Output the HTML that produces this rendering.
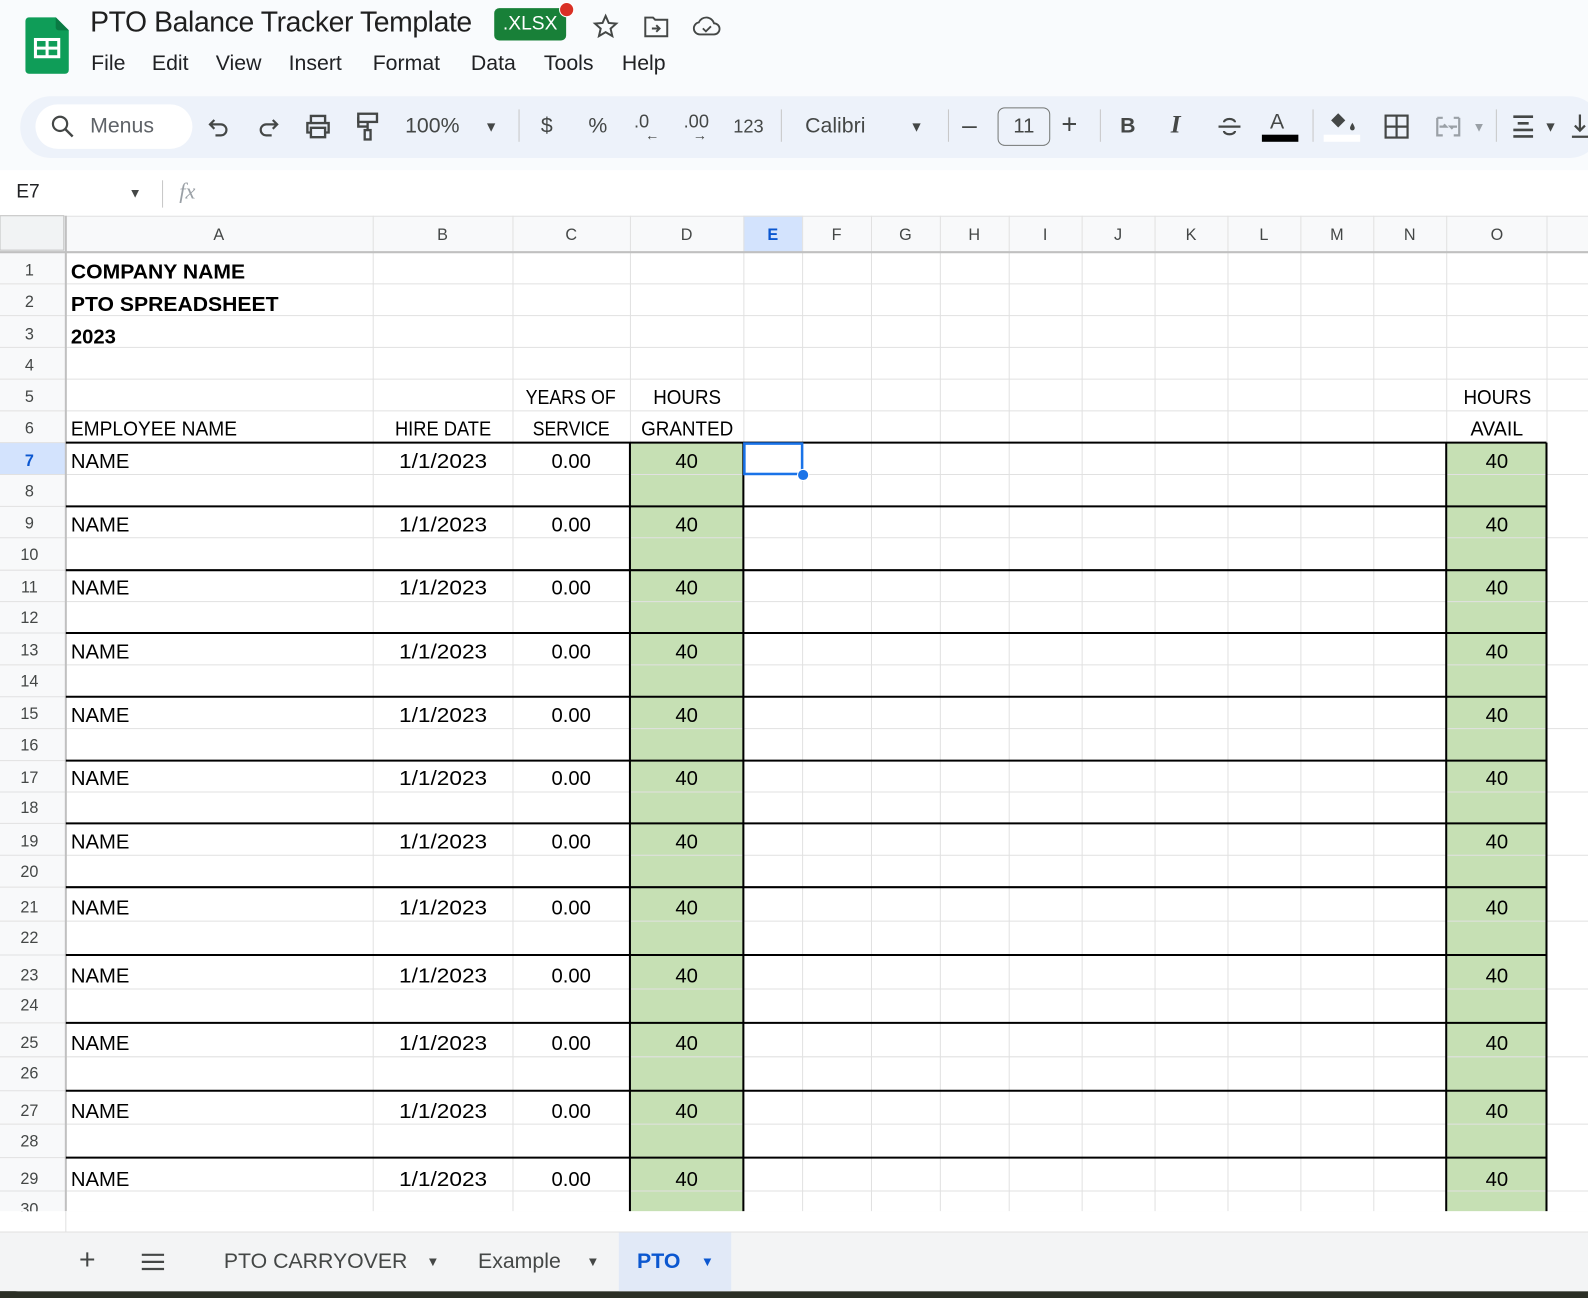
<!DOCTYPE html>
<html><head><meta charset="utf-8"><style>
html,body{margin:0;padding:0;width:1588px;height:1298px;overflow:hidden;background:#2b2f25;}
#w{position:absolute;left:0;top:0;width:1568px;height:1282px;transform:scale(1.01276);transform-origin:0 0;font-family:"Liberation Sans",Arial,sans-serif;}
.a{position:absolute;white-space:nowrap;}
.menu{top:51px;font-size:21px;color:#202124;}
.tb{top:113px;font-size:21px;color:#444746;}
.sep{position:absolute;top:108px;width:1px;height:32px;background:#c7c7c7;}
</style></head><body><div id="w">
<div class="a" style="left:0;top:0;width:1568px;height:1275px;background:#f9fbfd;border-radius:0 0 0 18px;overflow:hidden"></div>
<svg class="a" style="left:25px;top:17px" width="43" height="56" viewBox="0 0 43 56"><path d="M4 0h26l13 13v39a4 4 0 0 1-4 4H4a4 4 0 0 1-4-4V4a4 4 0 0 1 4-4z" fill="#0f9d58"/><path d="M30 0l13 13H33a3 3 0 0 1-3-3z" fill="#0a7a43"/><rect x="10" y="22" width="23" height="17" fill="none" stroke="#fff" stroke-width="3"/><line x1="21.5" y1="22" x2="21.5" y2="39" stroke="#fff" stroke-width="3"/><line x1="10" y1="30.5" x2="33" y2="30.5" stroke="#fff" stroke-width="3"/></svg>
<div class="a" style="left:89px;top:6px;font-size:28px;color:#1f1f1f;letter-spacing:-0.4px">PTO Balance Tracker Template</div>
<div class="a" style="left:488px;top:8px;width:71px;height:32px;background:#188038;border-radius:5px;color:#fff;font-size:19px;line-height:32px;text-align:center">.XLSX</div>
<div class="a" style="left:552px;top:2px;width:13px;height:13px;background:#d93025;border-radius:50%;border:1px solid #fff"></div>
<svg class="a" style="left:585px;top:13px" width="26" height="26" viewBox="0 0 24 24"><path d="M12 2.5l2.8 6.4 6.9.6-5.2 4.6 1.6 6.8L12 17.3l-6.1 3.6 1.6-6.8-5.2-4.6 6.9-.6z" fill="none" stroke="#444746" stroke-width="1.8"/></svg>
<svg class="a" style="left:635px;top:14px" width="26" height="24" viewBox="0 0 24 22"><path d="M2 3h7l2 2h11v15H2z" fill="none" stroke="#444746" stroke-width="1.8"/><path d="M8 13h7m-3-3l3 3-3 3" fill="none" stroke="#444746" stroke-width="1.8"/></svg>
<svg class="a" style="left:683px;top:14px" width="30" height="24" viewBox="0 0 30 22"><path d="M8 19a6 6 0 0 1-1-11.9A8 8 0 0 1 22 8a5.5 5.5 0 0 1 0 11z" fill="none" stroke="#444746" stroke-width="1.8"/><path d="M11 13l3 3 5-5" fill="none" stroke="#444746" stroke-width="1.8"/></svg>
<div class="a menu" style="left:90px">File</div><div class="a menu" style="left:150px">Edit</div><div class="a menu" style="left:213px">View</div><div class="a menu" style="left:285px">Insert</div><div class="a menu" style="left:368px">Format</div><div class="a menu" style="left:465px">Data</div><div class="a menu" style="left:537px">Tools</div><div class="a menu" style="left:614px">Help</div>
<div class="a" style="left:20px;top:95px;width:1560px;height:61px;background:#edf2fa;border-radius:30px"></div>
<div class="a" style="left:35px;top:103px;width:155px;height:44px;background:#fff;border-radius:22px"></div>
<svg class="a" style="left:49px;top:112px" width="26" height="26" viewBox="0 0 24 24"><circle cx="9.5" cy="9.5" r="6.5" fill="none" stroke="#444746" stroke-width="2"/><path d="M14.5 14.5l6.5 6.5" stroke="#444746" stroke-width="2.2"/></svg>
<div class="a tb" style="left:89px;color:#5f6368">Menus</div>
<svg class="a" style="left:203px;top:112px" width="26" height="26" viewBox="0 0 24 24"><path d="M8 6L4 10l4 4M4 10h10a5 5 0 0 1 0 10H9" fill="none" stroke="#444746" stroke-width="2"/></svg>
<svg class="a" style="left:252px;top:112px" width="26" height="26" viewBox="0 0 24 24"><path d="M16 6l4 4-4 4M20 10H10a5 5 0 0 0 0 10h5" fill="none" stroke="#444746" stroke-width="2"/></svg>
<svg class="a" style="left:300px;top:111px" width="28" height="28" viewBox="0 0 24 24"><path d="M6 8V3h12v5M6 17H3V9h18v8h-3M6 13h12v8H6z" fill="none" stroke="#444746" stroke-width="2"/></svg>
<svg class="a" style="left:350px;top:110px" width="26" height="30" viewBox="0 0 22 26"><rect x="3" y="2" width="16" height="7" fill="none" stroke="#444746" stroke-width="2"/><path d="M11 9v4H3V5M11 13v3" fill="none" stroke="#444746" stroke-width="2"/><rect x="8.5" y="16" width="5" height="8" fill="none" stroke="#444746" stroke-width="2"/></svg>
<div class="a tb" style="left:400px">100%</div>
<div class="a tb" style="left:478px;font-size:14px;top:117px">▼</div>
<div class="sep" style="left:512px"></div>
<div class="a tb" style="left:534px">$</div><div class="a tb" style="left:581px">%</div>
<div class="a tb" style="left:626px;font-size:18px;top:110px">.0</div><div class="a tb" style="left:637px;font-size:14px;top:125px">←</div>
<div class="a tb" style="left:675px;font-size:18px;top:110px">.00</div><div class="a tb" style="left:684px;font-size:14px;top:125px">→</div>
<div class="a tb" style="left:724px;font-size:18px;top:115px">123</div>
<div class="sep" style="left:771px"></div>
<div class="a tb" style="left:795px">Calibri</div>
<div class="a tb" style="left:898px;font-size:14px;top:117px">▼</div>
<div class="sep" style="left:936px"></div>
<div class="a tb" style="left:950px;top:108px;font-size:26px">–</div>
<div class="a" style="left:985px;top:106px;width:50px;height:36px;border:1px solid #747775;border-radius:7px;font-size:20px;line-height:36px;text-align:center;color:#444746">11</div>
<div class="a tb" style="left:1048px;top:108px;font-size:27px">+</div>
<div class="sep" style="left:1086px"></div>
<div class="a tb" style="left:1106px;font-weight:bold">B</div>
<div class="a tb" style="left:1156px;font-style:italic;font-family:'Liberation Serif',serif;font-size:25px;top:110px;font-weight:bold">I</div>
<svg class="a" style="left:1201px;top:112px" width="26" height="26" viewBox="0 0 24 24"><path d="M2 12h20M7 8a5 3 0 0 1 10 0M7 16a5 3 0 0 0 10 0" fill="none" stroke="#444746" stroke-width="2"/></svg>
<div class="a tb" style="left:1254px;top:109px">A</div>
<div class="a" style="left:1246px;top:133px;width:36px;height:7px;background:#000"></div>
<div class="sep" style="left:1296px"></div>
<svg class="a" style="left:1312px;top:107px" width="28" height="26" viewBox="0 0 24 22"><path d="M6 2l8 8-6 6-6-6 6-6z" fill="#444746"/><path d="M20 12c0 0 2 3 2 4.5a2 2 0 0 1-4 0c0-1.5 2-4.5 2-4.5z" fill="#444746"/></svg>
<div class="a" style="left:1307px;top:133px;width:36px;height:7px;background:#fff"></div>
<svg class="a" style="left:1366px;top:112px" width="26" height="26" viewBox="0 0 24 24"><rect x="2" y="2" width="20" height="20" fill="none" stroke="#444746" stroke-width="2"/><path d="M12 2v20M2 12h20" stroke="#444746" stroke-width="2"/></svg>
<svg class="a" style="left:1417px;top:112px" width="26" height="26" viewBox="0 0 24 24"><path d="M2 4h5M2 4v16h5M22 4h-5M22 4v16h-5M4 12h6l-2-2M20 12h-6l2 2" fill="none" stroke="#9aa0a6" stroke-width="2"/></svg>
<div class="a tb" style="left:1454px;font-size:13px;top:118px;color:#9aa0a6">▼</div>
<div class="sep" style="left:1477px"></div>
<svg class="a" style="left:1491px;top:112px" width="26" height="26" viewBox="0 0 24 24"><path d="M3 3h18M7 9h10M3 15h18M3 21h18" stroke="#444746" stroke-width="2.4"/></svg>
<div class="a tb" style="left:1524px;font-size:14px;top:117px">▼</div>
<svg class="a" style="left:1552px;top:110px" width="16" height="28" viewBox="0 0 16 28"><path d="M8 3v16M3 14l5 5 5-5M0 25h16" fill="none" stroke="#444746" stroke-width="2.2"/></svg>
<div class="a" style="left:0;top:168px;width:1568px;height:45px;background:#fff"></div>
<div class="a" style="left:16px;top:179px;font-size:19px;color:#202124">E7</div>
<div class="a" style="left:127px;top:183px;font-size:13px;color:#444746">▼</div>
<div class="a" style="left:160px;top:178px;width:1px;height:27px;background:#c7c7c7"></div>
<div class="a" style="left:177px;top:176px;font-size:22px;color:#9aa0a6;font-family:'Liberation Serif',serif;font-style:italic">fx</div>
<svg class="a" style="left:0;top:0" width="1568" height="1275" viewBox="0 0 1568 1275" font-family="Liberation Sans, Arial, sans-serif">
<rect x="0" y="213" width="1568" height="983" fill="#fff"/>
<rect x="0" y="213" width="1568" height="36" fill="#f8f9fa"/>
<rect x="0" y="249" width="65" height="947" fill="#f8f9fa"/>
<rect x="734" y="213" width="58" height="36" fill="#d3e3fd"/>
<rect x="0" y="437" width="65" height="31.5" fill="#d3e3fd"/>
<rect x="622" y="437" width="112" height="759" fill="#c6e0b4"/>
<rect x="1428" y="437" width="99" height="759" fill="#c6e0b4"/>
<g stroke="#e1e1e1" stroke-width="1">
<path d="M0 213.5H1568M0 280.3H1568M0 311.7H1568M0 343H1568M0 374.3H1568M0 405.7H1568M0 468.5H1568M0 531H1568M0 594H1568M0 656.5H1568M0 719.5H1568M0 782H1568M0 844.5H1568M0 909.5H1568M0 976.5H1568M0 1043.5H1568M0 1110H1568M0 1176H1568"/>
<path d="M368.5 213V1196M506.5 213V1196M622.5 213V1196M734.5 213V1196M792.5 213V1196M860.5 213V1196M928.5 213V1196M996.5 213V1196M1068.5 213V1196M1140.5 213V1196M1212.5 213V1196M1284.5 213V1196M1356.5 213V1196M1428.5 213V1196M1527.5 213V1196"/>
<path d="M0 500H65M0 563H65M0 625H65M0 688H65M0 751H65M0 813H65M0 876H65M0 943H65M0 1010H65M0 1077H65M0 1143H65M0 437H65"/>
</g>
<path d="M0 249H1568M65 213V1196" stroke="#c0c0c0" stroke-width="2"/>
<rect x="0" y="213" width="63" height="34" fill="#f1f3f4" stroke="#c0c0c0"/>
<g stroke="#000" stroke-width="2">
<path d="M65 437H1527M65 500H1527M65 563H1527M65 625H1527M65 688H1527M65 751H1527M65 813H1527M65 876H1527M65 943H1527M65 1010H1527M65 1077H1527M65 1143H1527"/>
<path d="M622 437V1196M734 437V1196M1428 437V1196M1527 437V1196"/>
</g>
<g font-size="16" fill="#444746" text-anchor="middle">
<text x="216" y="237">A</text><text x="437" y="237">B</text><text x="564" y="237">C</text><text x="678" y="237">D</text><text x="763" y="237" font-weight="bold" fill="#0b57d0">E</text><text x="826" y="237">F</text><text x="894" y="237">G</text><text x="962" y="237">H</text><text x="1032" y="237">I</text><text x="1104" y="237">J</text><text x="1176" y="237">K</text><text x="1248" y="237">L</text><text x="1320" y="237">M</text><text x="1392" y="237">N</text><text x="1478" y="237">O</text>
<text x="29" y="272">1</text><text x="29" y="303">2</text><text x="29" y="335">3</text><text x="29" y="366">4</text><text x="29" y="397">5</text><text x="29" y="428">6</text><text x="29" y="460" font-weight="bold" fill="#0b57d0">7</text><text x="29" y="490">8</text><text x="29" y="522">9</text><text x="29" y="553">10</text><text x="29" y="585">11</text><text x="29" y="615">12</text><text x="29" y="647">13</text><text x="29" y="678">14</text><text x="29" y="710">15</text><text x="29" y="741">16</text><text x="29" y="773">17</text><text x="29" y="803">18</text><text x="29" y="836">19</text><text x="29" y="866">20</text><text x="29" y="901">21</text><text x="29" y="931">22</text><text x="29" y="968">23</text><text x="29" y="998">24</text><text x="29" y="1035">25</text><text x="29" y="1065">26</text><text x="29" y="1102">27</text><text x="29" y="1132">28</text><text x="29" y="1169">29</text><text x="29" y="1199">30</text>
</g>
<g font-size="20" font-weight="bold" fill="#000">
<text x="70" y="275" textLength="172" lengthAdjust="spacingAndGlyphs">COMPANY NAME</text><text x="70" y="307" textLength="205" lengthAdjust="spacingAndGlyphs">PTO SPREADSHEET</text><text x="70" y="339">2023</text>
</g>
<g font-size="20" fill="#000">
<text x="519" y="399" textLength="89" lengthAdjust="spacingAndGlyphs">YEARS OF</text><text x="645" y="399" textLength="67" lengthAdjust="spacingAndGlyphs">HOURS</text><text x="1445" y="399" textLength="67" lengthAdjust="spacingAndGlyphs">HOURS</text>
<text x="70" y="430" textLength="164" lengthAdjust="spacingAndGlyphs">EMPLOYEE NAME</text><text x="390" y="430" textLength="95" lengthAdjust="spacingAndGlyphs">HIRE DATE</text><text x="526" y="430" textLength="76" lengthAdjust="spacingAndGlyphs">SERVICE</text><text x="633" y="430" textLength="91" lengthAdjust="spacingAndGlyphs">GRANTED</text><text x="1452" y="430" textLength="52" lengthAdjust="spacingAndGlyphs">AVAIL</text>
</g>
<g font-size="20" fill="#000">
<text x="70" y="462">NAME</text><text x="70" y="525">NAME</text><text x="70" y="587">NAME</text><text x="70" y="650">NAME</text><text x="70" y="713">NAME</text><text x="70" y="775">NAME</text><text x="70" y="838">NAME</text><text x="70" y="903">NAME</text><text x="70" y="970">NAME</text><text x="70" y="1037">NAME</text><text x="70" y="1104">NAME</text><text x="70" y="1171">NAME</text>
</g>
<g font-size="20" fill="#000">
<text x="394" y="462" textLength="87" lengthAdjust="spacingAndGlyphs">1/1/2023</text><text x="394" y="525" textLength="87" lengthAdjust="spacingAndGlyphs">1/1/2023</text><text x="394" y="587" textLength="87" lengthAdjust="spacingAndGlyphs">1/1/2023</text><text x="394" y="650" textLength="87" lengthAdjust="spacingAndGlyphs">1/1/2023</text><text x="394" y="713" textLength="87" lengthAdjust="spacingAndGlyphs">1/1/2023</text><text x="394" y="775" textLength="87" lengthAdjust="spacingAndGlyphs">1/1/2023</text><text x="394" y="838" textLength="87" lengthAdjust="spacingAndGlyphs">1/1/2023</text><text x="394" y="903" textLength="87" lengthAdjust="spacingAndGlyphs">1/1/2023</text><text x="394" y="970" textLength="87" lengthAdjust="spacingAndGlyphs">1/1/2023</text><text x="394" y="1037" textLength="87" lengthAdjust="spacingAndGlyphs">1/1/2023</text><text x="394" y="1104" textLength="87" lengthAdjust="spacingAndGlyphs">1/1/2023</text><text x="394" y="1171" textLength="87" lengthAdjust="spacingAndGlyphs">1/1/2023</text>
</g>
<g font-size="20" fill="#000" text-anchor="middle">
<text x="564" y="462">0.00</text><text x="564" y="525">0.00</text><text x="564" y="587">0.00</text><text x="564" y="650">0.00</text><text x="564" y="713">0.00</text><text x="564" y="775">0.00</text><text x="564" y="838">0.00</text><text x="564" y="903">0.00</text><text x="564" y="970">0.00</text><text x="564" y="1037">0.00</text><text x="564" y="1104">0.00</text><text x="564" y="1171">0.00</text>
<text x="678" y="462">40</text><text x="678" y="525">40</text><text x="678" y="587">40</text><text x="678" y="650">40</text><text x="678" y="713">40</text><text x="678" y="775">40</text><text x="678" y="838">40</text><text x="678" y="903">40</text><text x="678" y="970">40</text><text x="678" y="1037">40</text><text x="678" y="1104">40</text><text x="678" y="1171">40</text>
<text x="1478" y="462">40</text><text x="1478" y="525">40</text><text x="1478" y="587">40</text><text x="1478" y="650">40</text><text x="1478" y="713">40</text><text x="1478" y="775">40</text><text x="1478" y="838">40</text><text x="1478" y="903">40</text><text x="1478" y="970">40</text><text x="1478" y="1037">40</text><text x="1478" y="1104">40</text><text x="1478" y="1171">40</text>
</g>
<rect x="735" y="438" width="57" height="30" fill="none" stroke="#1a73e8" stroke-width="2.5"/>
<circle cx="793" cy="469" r="5.5" fill="#1a73e8" stroke="#fff" stroke-width="1"/>
<rect x="0" y="1196" width="1568" height="20" fill="#fff"/>
<path d="M65 1196V1216" stroke="#e1e1e1"/>
<path d="M0 1216.5H1568" stroke="#e0e0e0"/>
<rect x="0" y="1217" width="1568" height="58" fill="#f3f4f5"/>
<rect x="611" y="1217" width="111" height="58" fill="#e1e9f7"/>
</svg>
<div class="a" style="left:78px;top:1228px;font-size:28px;color:#444746">+</div>
<svg class="a" style="left:139px;top:1236px" width="24" height="20" viewBox="0 0 24 20"><path d="M1 3h22M1 10h22M1 17h22" stroke="#444746" stroke-width="2.2"/></svg>
<div class="a" style="left:221px;top:1234px;font-size:21px;color:#444746">PTO CARRYOVER</div>
<div class="a" style="left:421px;top:1238px;font-size:13px;color:#444746">▼</div>
<div class="a" style="left:472px;top:1234px;font-size:21px;color:#444746">Example</div>
<div class="a" style="left:579px;top:1238px;font-size:13px;color:#444746">▼</div>
<div class="a" style="left:629px;top:1234px;font-size:21px;color:#0b57d0;font-weight:bold">PTO</div>
<div class="a" style="left:692px;top:1238px;font-size:13px;color:#0b57d0">▼</div>
</div></body></html>
